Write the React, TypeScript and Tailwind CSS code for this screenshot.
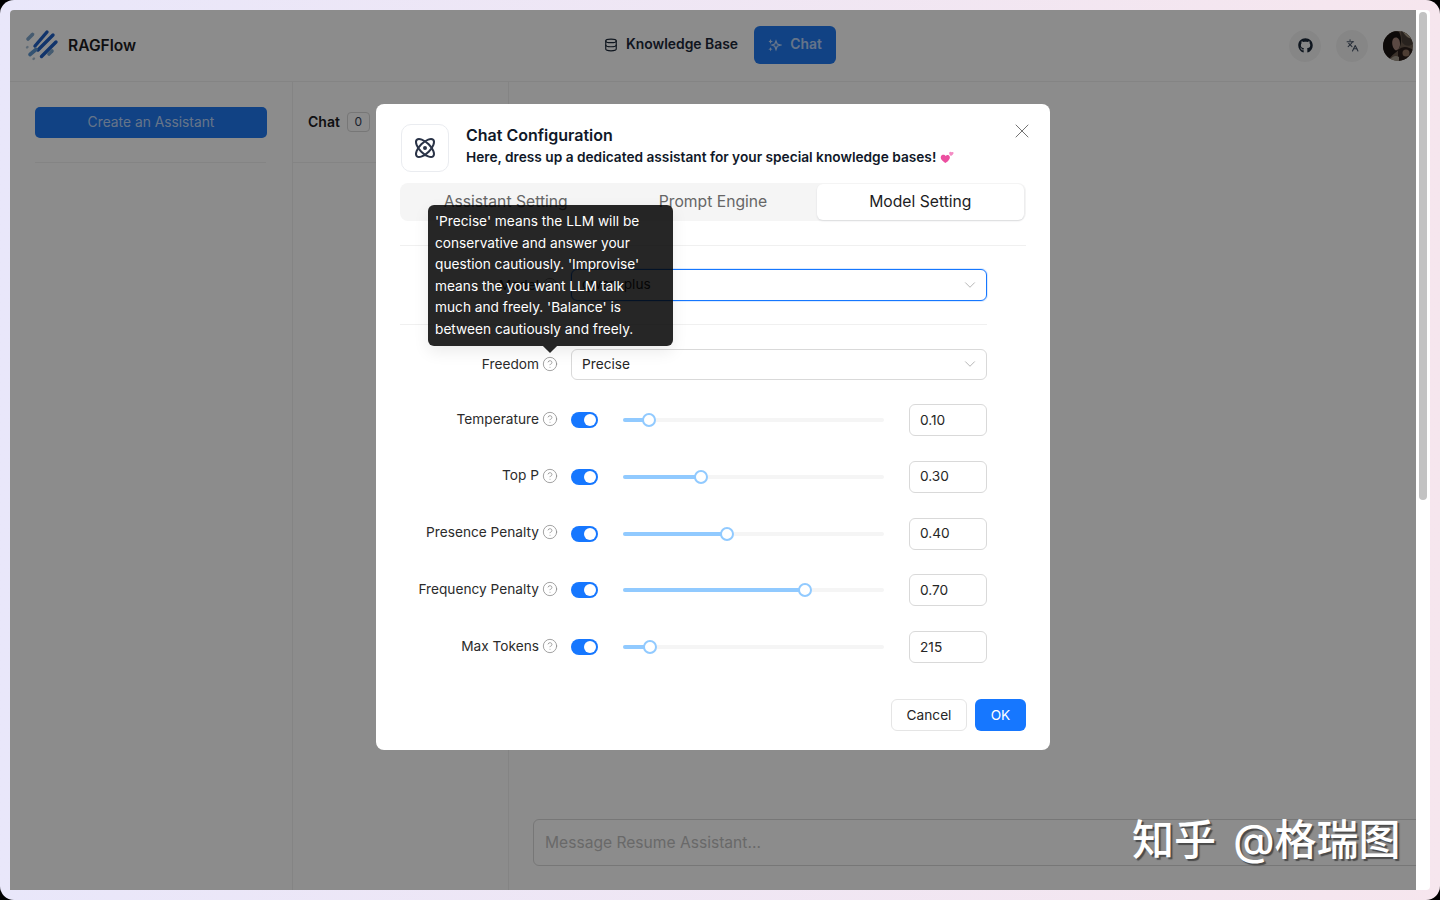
import React from 'react';
import { Atom, ChevronDown, CircleHelp, Database, Languages, X } from 'lucide-react';
import { FaGithub } from 'react-icons/fa';

const font = { fontFamily: 'Inter, "Noto Sans CJK SC", sans-serif' };

const params = [
    { label: 'Temperature', ratio: 0.1, value: '0.10' },
    { label: 'Top P', ratio: 0.3, value: '0.30' },
    { label: 'Presence Penalty', ratio: 0.4, value: '0.40' },
    { label: 'Frequency Penalty', ratio: 0.7, value: '0.70' },
    { label: 'Max Tokens', ratio: 0.105, value: '215' },
];

function Logo() {
    return (
        <svg width="34" height="34" viewBox="0 0 34 34" fill="none" strokeLinecap="round">
            <path d="M10 17 L22 3" stroke="#1f5fc4" strokeWidth="3.4" />
            <path d="M13 21 L28 6" stroke="#1f5fc4" strokeWidth="3.4" />
            <path d="M16.5 27.5 L31 13" stroke="#1f5fc4" strokeWidth="3.4" />
            <path d="M5 25.5 L11 20.5" stroke="#5f97cf" strokeWidth="3.6" />
            <path d="M3 10 L7.5 5.5" stroke="#7ea6cc" strokeWidth="3.6" />
            <path d="M24 25 L27 22" stroke="#7ea6cc" strokeWidth="3.6" />
            <path d="M2 18.5 L2.5 18" stroke="#a9bfd4" strokeWidth="2.4" />
            <path d="M8.5 30 L9 29.5" stroke="#a9bfd4" strokeWidth="2.4" />
        </svg>
    );
}

function ChatIcon({ className }: { className?: string }) {
    return (
        <svg className={className} width="14" height="14" viewBox="0 0 14 14" fill="none" stroke="currentColor" strokeWidth="1.3">
            <path d="M8 3 L9.2 6 L12.5 7 L9.2 8.2 L8 11.5 L6.8 8.2 L4 7 L6.8 6 Z" />
            <path d="M2.5 1 L3.2 2.8 L5 3.5 L3.2 4.2 L2.5 6 L1.8 4.2 L0.5 3.5 L1.8 2.8 Z" fill="currentColor" stroke="none" />
            <path d="M2.5 9 L3.1 10.6 L4.7 11.2 L3.1 11.8 L2.5 13.4 L1.9 11.8 L0.3 11.2 L1.9 10.6 Z" fill="currentColor" stroke="none" />
        </svg>
    );
}

function Avatar() {
    return (
        <svg width="30" height="30" viewBox="0 0 30 30">
            <defs>
                <clipPath id="av">
                    <circle cx="15" cy="15" r="15" />
                </clipPath>
            </defs>
            <g clipPath="url(#av)">
                <rect width="30" height="30" fill="#6a5a4e" />
                <path d="M0 30 V6 C4 0 12 -1 16 1 C20 8 18 18 12 22 C8 25 6 28 5 30 Z" fill="#191311" />
                <path d="M10 8 C13 5 17 7 17 13 C17 18 14 20 12 19 C9 16 8.5 11 10 8 Z" fill="#a5857a" />
                <path d="M18 0 H30 V13 C26 16 21 15 19 11 Z" fill="#4a3f38" />
                <path d="M20 1 H30 V8 C27 8 23 6 20 1 Z" fill="#a89a86" />
                <path d="M15 19 C20 14 26 16 30 19 V30 H15 Z" fill="#2a1e1a" />
                <circle cx="23" cy="22" r="3.5" fill="#8f7160" />
                <path d="M6 30 C9 25 13 24 16 26 V30 Z" fill="#a49c8e" />
            </g>
        </svg>
    );
}

function Hearts() {
    return (
        <svg className="ml-[4px] inline-block align-[-2px]" width="14" height="14" viewBox="0 0 14 14">
            <path d="M5.5 13 C2 11 0 8.5 1 6.3 C2 4.2 4.6 4.4 5.7 6 C6.8 4.6 9.2 4.8 9.8 6.8 C10.3 9 8 11.5 5.5 13 Z" fill="#ec4fa0" />
            <path d="M11 6 C9.6 5 8.8 3.6 9.3 2.5 C9.8 1.5 11 1.6 11.6 2.3 C12.2 1.6 13.4 1.8 13.6 2.8 C13.8 3.8 12.4 5.2 11 6 Z" fill="#f48cc4" />
        </svg>
    );
}

function Help() {
    return <CircleHelp size={16} strokeWidth={1.2} className="mr-[-1px] shrink-0 text-[#8c8c8c]" />;
}

function Label({ text, className }: { text: string; className?: string }) {
    return (
        <div className={`flex items-center justify-end gap-[3px] text-[13.7px] text-[#2b2b2b] ${className ?? ''}`}>
            <span>{text}</span>
            <Help />
        </div>
    );
}

function Select({ text, focused, short }: { text: string; focused?: boolean; short?: boolean }) {
    return (
        <div
            className={`flex items-center justify-between rounded-[6px] border bg-white pb-[1px] pl-[10px] pr-[7px] text-[13.7px] text-[#262626] ${
                short ? 'h-[31px]' : 'h-[32px]'
            } ${focused ? 'border-[#1677ff] shadow-[0_0_0_1px_rgba(22,119,255,0.15)]' : 'border-[#d9d9d9]'}`}
        >
            <span>{text}</span>
            <ChevronDown size={18} strokeWidth={1.1} className="text-[#a6a6a6]" />
        </div>
    );
}

function ParamRow({ label, ratio, value }: { label: string; ratio: number; value: string }) {
    return (
        <div className="grid h-[32px] grid-cols-[157px_1fr] items-center gap-[14px]">
            <Label text={label} className="pb-[2px]" />
            <div className="flex items-center">
                <div className="flex h-[16px] w-[27px] items-center justify-end rounded-full bg-[#1677ff] pr-[2px]">
                    <div className="h-[12px] w-[12px] rounded-full bg-white" />
                </div>
                <div className="relative ml-[25px] h-[4px] w-[261px] rounded-full bg-[#f5f5f5]">
                    <div className="h-full rounded-full bg-[#91caff]" style={{ width: `${ratio * 100}%` }} />
                    <div
                        className="absolute top-[-5px] ml-[-7.5px] h-[14px] w-[14px] rounded-full border-2 border-[#91caff] bg-white"
                        style={{ left: `${ratio * 100}%` }}
                    />
                </div>
                <div className="ml-[25px] flex h-[32px] w-[78px] items-center rounded-[6px] border border-[#d9d9d9] bg-white pl-[10px] text-[13.7px] text-[#262626]">
                    {value}
                </div>
            </div>
        </div>
    );
}

function Tooltip() {
    return (
        <div className="absolute left-[52px] top-[101px] z-10 w-[245px] rounded-[6px] bg-[#000000]/85 py-[6px] pl-[7px] pr-[23px] text-[13.7px] leading-[21.5px] text-white shadow-[0_6px_16px_rgba(0,0,0,0.08)]">
            'Precise' means the LLM will be conservative and answer your question cautiously. 'Improvise' means the you want LLM talk much and freely. 'Balance' is between cautiously and freely.
            <div className="absolute bottom-[-5px] left-[117px] h-[10px] w-[10px] rotate-45 bg-[#262626]" />
        </div>
    );
}

function ChatModal() {
    return (
        <div className="relative h-[646px] w-[674px] rounded-[8px] bg-white px-[24px] pt-[20px]">
            <button className="absolute right-[16px] top-[15px] text-[#737373]">
                <X size={24} strokeWidth={1} />
            </button>
            <div className="flex items-center gap-[17px] pl-[1px]">
                <div className="flex h-[48px] w-[48px] items-center justify-center rounded-[10px] border border-[#eaecf0] bg-white">
                    <Atom size={24} strokeWidth={2} className="text-[#2a3347]" />
                </div>
                <div className="pb-[4px]">
                    <div className="text-[16px] font-semibold leading-[22px] text-[#101828]">Chat Configuration</div>
                    <div className="text-[13.7px] font-semibold leading-[22px] text-[#101828]">
                        Here, dress up a dedicated assistant for your special knowledge bases!
                        <Hearts />
                    </div>
                </div>
            </div>

            <div className="mt-[11px] grid h-[38px] grid-cols-3 rounded-[8px] bg-[#f5f5f5] px-[2px] py-[1px] text-[15.7px] text-[#666666]">
                <div className="flex items-center justify-center">Assistant Setting</div>
                <div className="flex items-center justify-center">Prompt Engine</div>
                <div className="flex items-center justify-center rounded-[6px] bg-white text-[#1d1d1f] shadow-[0_1px_2px_rgba(16,24,40,0.12)]">
                    Model Setting
                </div>
            </div>

            <div className="mt-[24px] border-t border-[#f0f0f0]" />

            <div className="pr-[39px]">
                <div className="mt-[23px] grid grid-cols-[157px_1fr] items-center gap-[14px]">
                    <Label text="Model" />
                    <Select text="qwen-plus" focused />
                </div>
                <div className="mt-[23px] border-t border-[#f0f0f0]" />
                <div className="mt-[24px] grid grid-cols-[157px_1fr] items-center gap-[14px]">
                    <Label text="Freedom" className="pb-[1px]" />
                    <Select text="Precise" short />
                </div>
                <div className="mt-[24px] flex flex-col gap-[24.75px]">
                    {params.map(p => (
                        <ParamRow key={p.label} {...p} />
                    ))}
                </div>
            </div>

            <div className="mt-[36px] flex justify-end gap-[8px] text-[13.7px]">
                <button className="h-[32px] w-[76px] rounded-[6px] border border-[#e5e5e5] bg-white text-[#262626]">Cancel</button>
                <button className="h-[32px] w-[51px] rounded-[6px] bg-[#1677ff] text-white">OK</button>
            </div>

            <Tooltip />
        </div>
    );
}

function Header() {
    return (
        <div className="grid h-[72px] grid-cols-[1fr_auto_1fr] items-center border-b border-[#f0f0f0] px-[3px]">
            <div className="flex items-center gap-[9px] pl-[12px]">
                <Logo />
                <span className="text-[15.6px] font-semibold text-[#1d1d1f]">RAGFlow</span>
            </div>
            <div className="flex items-center gap-[2px] pb-[2px] text-[13.9px] font-semibold">
                <div className="flex h-[38px] w-[162px] items-center justify-center gap-[8px] rounded-[8px] text-[#1d2939]">
                    <Database size={14} strokeWidth={2} />
                    Knowledge Base
                </div>
                <div className="flex h-[38px] w-[82px] items-center justify-center gap-[8px] rounded-[6px] bg-[#1f78f0] text-white/70">
                    <ChatIcon />
                    Chat
                </div>
            </div>
            <div className="flex items-center justify-end gap-[15px]">
                <div className="flex h-[32px] w-[32px] items-center justify-center rounded-full bg-[#f5f5f5] text-[#1d2939]">
                    <FaGithub size={15} />
                </div>
                <div className="flex h-[32px] w-[32px] items-center justify-center rounded-full bg-[#f5f5f5] text-[#475467]">
                    <Languages size={13} strokeWidth={2} />
                </div>
                <Avatar />
            </div>
        </div>
    );
}

export default function App() {
    return (
        <div className="h-screen w-screen overflow-hidden bg-black" style={font}>
            <div className="flex h-full rounded-[14px] bg-gradient-to-r from-[#e9e7fa] to-[#f6e6ee] py-[10px] pl-[10px] pr-[10px]">
                <div className="relative flex min-w-0 flex-1 flex-col overflow-hidden rounded-tl-[4px] bg-white">
                    <Header />
                    <div className="flex min-h-0 flex-1">
                        <div className="w-[283px] border-r border-[#f0f0f0] pl-[25px] pr-[26px] pt-[25px]">
                            <button className="h-[31px] w-[232px] rounded-[5px] bg-[#1f78f0] pb-[1px] text-[13.8px] text-white/70">
                                Create an Assistant
                            </button>
                            <div className="mt-[24px] border-t border-[#f0f0f0]" />
                        </div>
                        <div className="w-[216px] border-r border-[#f0f0f0]">
                            <div className="flex h-[81px] items-center gap-[7px] border-b border-[#f0f0f0] pb-[1px] pl-[15px]">
                                <span className="text-[14px] font-semibold text-[#1d1d1f]">Chat</span>
                                <span className="flex h-[20px] w-[23px] items-center justify-center rounded-[4px] border border-[#d9d9d9] text-[12px] text-[#344054]">0</span>
                            </div>
                        </div>
                        <div className="flex min-w-0 flex-1 flex-col justify-end pb-[24px] pl-[24px]">
                            <div className="flex h-[47px] w-[1000px] items-center rounded-[6px] border border-[#d9d9d9] pl-[11px] pt-[1px] text-[15.6px] text-[#bfbfbf]">
                                Message Resume Assistant...
                            </div>
                        </div>
                    </div>
                    {/* dimmed backdrop + dialog */}
                    <div className="absolute inset-0 flex justify-center bg-black/45 pt-[94px]">
                        <ChatModal />
                    </div>
                </div>
                <div className="flex w-[14px] justify-center rounded-r-[4px] bg-white pt-[2px]">
                    <div className="h-[488px] w-[8px] rounded-full bg-[#c2c2c2]" />
                </div>
            </div>
            <div className="absolute left-[1132px] top-[810px] text-[42px] font-medium leading-[60px] text-white [word-spacing:6px] [text-shadow:2px_2px_1px_#4a4a4a]">
                知乎 @格瑞图
            </div>
        </div>
    );
}
